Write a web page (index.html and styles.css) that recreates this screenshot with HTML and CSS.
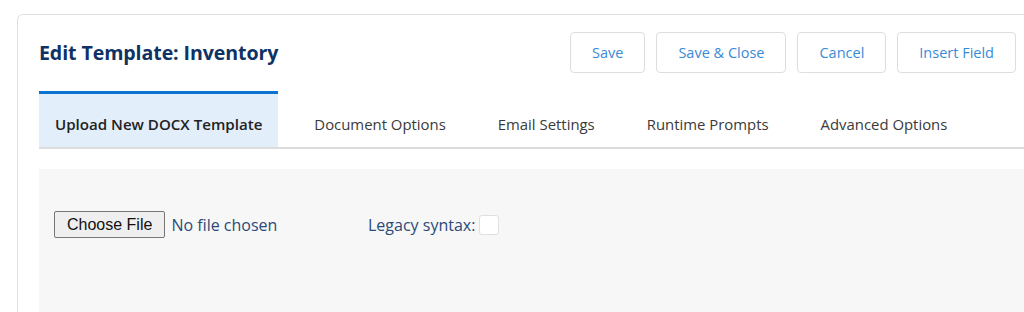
FILE: index.html
```html
<!DOCTYPE html>
<html>
<head>
<meta charset="utf-8">
<link rel="stylesheet" href="styles.css">
</head>
<body>
<div class="card">
  <div class="header">
    <h1 class="title">Edit Template: Inventory</h1>
    <div class="actions">
      <button class="btn">Save</button>
      <button class="btn">Save &amp; Close</button>
      <button class="btn">Cancel</button>
      <button class="btn">Insert Field</button>
    </div>
  </div>
  <div class="tabs">
    <div class="tab active">Upload New DOCX Template</div>
    <div class="tab">Document Options</div>
    <div class="tab">Email Settings</div>
    <div class="tab">Runtime Prompts</div>
    <div class="tab">Advanced Options</div>
  </div>
  <div class="panel">
    <div class="row">
      <div class="file">
        <button class="choose">Choose File</button>
        <span class="nofile">No file chosen</span>
      </div>
      <label class="legacy">Legacy syntax:<span class="check"></span></label>
    </div>
  </div>
</div>
</body>
</html>
```

FILE: styles.css
```css
html, body {
  margin: 0;
  padding: 0;
  background: #ffffff;
  overflow: hidden;
  height: 312px;
}
body {
  font-family: "Open Sans", "Noto Sans", sans-serif;
}
.card {
  margin: 14px 0 0 17px;
  width: 1040px;
  height: 298px;
  border: 1px solid #e0e0e0;
  border-bottom-width: 0;
  border-radius: 6px 6px 0 0;
  box-sizing: border-box;
  padding: 17px 0 0 21px;
  background: #fff;
  display: flex;
  flex-direction: column;
}
.header {
  display: flex;
  align-items: center;
  justify-content: space-between;
  padding-right: 40px;
}
.title {
  margin: 0;
  font-size: 19.6px;
  font-weight: 700;
  color: #0f3264;
  letter-spacing: -0.1px;
}
.actions {
  display: flex;
  gap: 11px;
}
.btn {
  height: 41px;
  padding: 0 21px;
  border: 1px solid #dedede;
  border-radius: 4px;
  background: #fff;
  color: #3a8ad6;
  font-family: "Open Sans", "Noto Sans", sans-serif;
  font-size: 14.5px;
}
.tabs {
  display: flex;
  gap: 20px;
  margin-top: 18px;
  border-bottom: 2px solid #dddddd;
}
.tab {
  height: 56px;
  box-sizing: border-box;
  border-top: 3px solid transparent;
  padding: 7px 16px 0;
  display: flex;
  align-items: center;
  font-size: 14.9px;
  color: #3a3a3a;
}
.tab.active {
  border-top-color: #0a72d0;
  background: #e3eefb;
  font-weight: 600;
  font-size: 15.1px;
  color: #222;
}
.panel {
  margin-top: 20px;
  background: #f7f7f7;
  flex: 1;
  padding: 42px 0 0 15px;
}
.row {
  display: flex;
  align-items: center;
}
.file {
  width: 314px;
  display: flex;
  align-items: center;
}
.choose {
  height: 27px;
  padding: 0 12px;
  background: #efefef;
  border: 1px solid #767676;
  border-radius: 2px;
  font-family: "Liberation Sans", Arial, sans-serif;
  font-size: 16px;
  color: #111;
}
.nofile, .legacy {
  margin-left: 6px;
  font-size: 16px;
  color: #2c4a78;
}
.legacy {
  margin-left: 0;
  display: flex;
  align-items: center;
}
.check {
  display: inline-block;
  width: 20px;
  height: 20px;
  margin-left: 4px;
  background: #fff;
  border: 1px solid #e0e0e0;
  border-radius: 3px;
  box-sizing: border-box;
}
```
